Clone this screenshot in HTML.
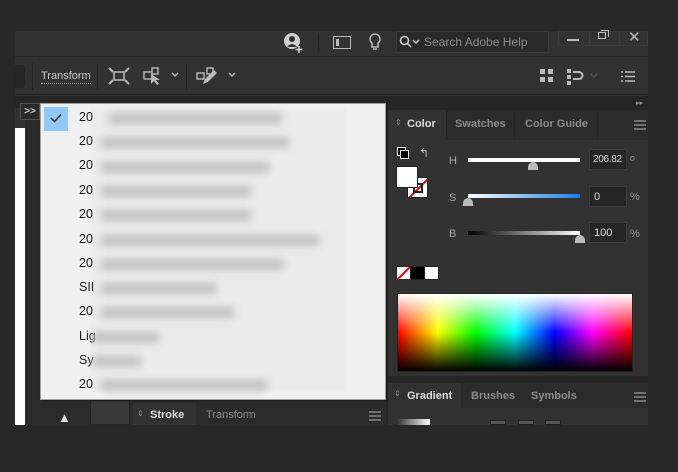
<!DOCTYPE html>
<html><head><meta charset="utf-8"><style>
*{margin:0;padding:0;box-sizing:border-box}
body{width:678px;height:472px;background:#282828;position:relative;overflow:hidden;font-family:"Liberation Sans",sans-serif}
.a{position:absolute}
.t{color:#c8c8c8;font-size:11px}
.tab{position:absolute;font-size:11px;font-weight:bold;color:#8d8d8d}
.row{position:absolute;left:79px;font-size:12.5px;color:#1a1a1a}
.bl{position:absolute;height:11px;background:#c2c2c2;filter:blur(4px);border-radius:5px}
</style></head><body>
<div class="a" style="left:15px;top:31px;width:633px;height:394px;background:#323232"></div>
<div class="a" style="left:15px;top:31px;width:633px;height:26px;background:#323232;border-bottom:1px solid #262626"></div>
<svg class="a" style="left:283px;top:32px" width="22" height="22" viewBox="0 0 22 22"><circle cx="9" cy="9" r="8" fill="#d0d0d0"/><circle cx="9" cy="7" r="3" fill="#323232"/><path d="M4 15 q5-6 10 0" fill="#323232"/><path d="M16 14v7M12.5 17.5h7" stroke="#d0d0d0" stroke-width="1.6"/></svg>
<div class="a" style="left:318px;top:34px;width:1px;height:18px;background:#262626"></div>
<div class="a" style="left:333px;top:36px;width:18px;height:13px;border:1.5px solid #bbb"></div>
<div class="a" style="left:336px;top:39px;width:3px;height:7px;background:#bbb"></div>
<svg class="a" style="left:368px;top:33px" width="14" height="19"><path d="M7 1a5 5 0 0 0-3 9v4h6v-4a5 5 0 0 0-3-9z" fill="none" stroke="#bbb" stroke-width="1.5"/><path d="M5 16h4" stroke="#bbb" stroke-width="1.5"/></svg>
<div class="a" style="left:396px;top:31px;width:153px;height:22px;background:#2a2a2a;border:1px solid #3a3a3a"></div>
<svg class="a" style="left:399px;top:35px" width="24" height="14"><circle cx="5.5" cy="5.5" r="4" fill="none" stroke="#ccc" stroke-width="1.6"/><path d="M8.5 8.5l3.5 3.5M14 5l3 3 3-3" stroke="#ccc" stroke-width="1.5" fill="none"/></svg>
<div class="a t" style="left:424px;top:35px;color:#8e8e8e;font-size:12px">Search Adobe Help</div>
<div class="a" style="left:558px;top:31px;width:90px;height:15px;border:1px solid #3b3b3b;background:#333"></div>
<div class="a" style="left:567px;top:39px;width:12px;height:2px;background:#bbb"></div>
<div class="a" style="left:589px;top:31px;width:1px;height:15px;background:#3b3b3b"></div>
<div class="a" style="left:619px;top:31px;width:1px;height:15px;background:#3b3b3b"></div>
<div class="a" style="left:598px;top:32px;width:8px;height:7px;border:1.5px solid #bbb"></div>
<div class="a" style="left:601px;top:30px;width:8px;height:7px;border:1.5px solid #bbb;border-left:none;border-bottom:none"></div>
<div class="a t" style="left:628px;top:28px;font-size:15px;color:#bbb">✕</div>
<div class="a" style="left:15px;top:58px;width:633px;height:37px;background:#323232;border-bottom:1px solid #262626"></div>
<div class="a" style="left:15px;top:65px;width:10px;height:23px;background:#262626;border-radius:0 3px 3px 0"></div>
<div class="a" style="left:32px;top:63px;width:1px;height:27px;background:#262626"></div>
<div class="a t" style="left:41px;top:70px;font-size:11px;color:#c8c8c8;border-bottom:1px dotted #999;line-height:13px">Transform</div>
<div class="a" style="left:97px;top:63px;width:1px;height:27px;background:#262626"></div>
<svg class="a" style="left:108px;top:67px" width="22" height="18"><rect x="6" y="5" width="10" height="8" fill="none" stroke="#bbb" stroke-width="1.5"/><path d="M1 1l4 4M21 1l-4 4M1 17l4-4M21 17l-4-4" stroke="#bbb" stroke-width="2"/></svg>
<svg class="a" style="left:143px;top:67px" width="38" height="20"><rect x="1" y="5" width="8" height="7" fill="none" stroke="#bbb" stroke-width="1.4"/><rect x="9" y="1" width="6" height="6" fill="none" stroke="#bbb" stroke-width="1.4"/><path d="M8 7l0 10 3-3 3 4 2-1-3-4 4 0z" fill="#bbb"/><path d="M29 6l3 3 3-3" fill="none" stroke="#bbb" stroke-width="1.4"/></svg>
<div class="a" style="left:186px;top:63px;width:1px;height:27px;background:#262626"></div>
<svg class="a" style="left:196px;top:67px" width="44" height="20"><rect x="1" y="6" width="7" height="6" fill="none" stroke="#bbb" stroke-width="1.4"/><rect x="11" y="1" width="6" height="6" fill="none" stroke="#bbb" stroke-width="1.4"/><path d="M7 17l2-5 9-9 3 3-9 9z" fill="#bbb"/><path d="M33 6l3 3 3-3" fill="none" stroke="#bbb" stroke-width="1.4"/></svg>
<svg class="a" style="left:539px;top:68px" width="16" height="16"><rect x="1" y="1" width="5" height="5" fill="#bbb"/><rect x="9" y="1" width="5" height="5" fill="#bbb"/><rect x="1" y="9" width="5" height="5" fill="#bbb"/><rect x="9" y="9" width="5" height="5" fill="#bbb"/><path d="M7.5 0v16M0 7.5h16" stroke="#323232" stroke-width="1.5"/></svg>
<svg class="a" style="left:566px;top:68px" width="36" height="18"><rect x="1" y="1" width="4" height="4" fill="#bbb"/><rect x="1" y="7" width="4" height="4" fill="#bbb"/><rect x="1" y="13" width="4" height="4" fill="#bbb"/><path d="M7 4h6a3 3 0 0 1 0 7h-6" fill="none" stroke="#bbb" stroke-width="2"/><path d="M25 6l3 3 3-3" fill="none" stroke="#555" stroke-width="1.2"/></svg>
<svg class="a" style="left:621px;top:71px" width="14" height="12"><path d="M0 1h2M0 5.5h2M0 10h2M4 1h10M4 5.5h10M4 10h10" stroke="#bbb" stroke-width="1.6"/></svg>
<div class="a" style="left:15px;top:96px;width:633px;height:12px;background:#262626"></div>
<div class="a" style="left:20px;top:103px;width:20px;height:17px;border:1px solid #555;background:#2a2a2a;color:#ccc;font-size:10px;text-align:center;line-height:15px;font-weight:bold">&gt;&gt;</div>
<div class="a" style="left:15px;top:128px;width:10px;height:297px;background:#fff"></div>
<div class="a" style="left:25px;top:120px;width:15px;height:305px;background:#2b2b2b"></div>
<div class="a" style="left:40px;top:400px;width:348px;height:25px;background:#2b2b2b"></div>
<div class="a" style="left:90px;top:400px;width:40px;height:25px;background:#383838;border:1px solid #262626"></div>
<div class="a" style="left:58px;top:410px;color:#ddd;font-size:13px">▲</div>
<div class="a" style="left:133px;top:403px;width:255px;height:22px;background:#2b2b2b"></div>
<div class="a" style="left:133px;top:403px;width:63px;height:22px;background:#323232"></div>
<div class="a" style="left:137px;top:409px;font-size:8px;color:#888">⇕</div>
<div class="tab" style="left:150px;top:409px;color:#ddd">Stroke</div>
<div class="tab" style="left:206px;top:409px;color:#8d8d8d;font-weight:normal">Transform</div>
<svg class="a" style="left:369px;top:411px" width="12" height="10"><path d="M0 1h12M0 5h12M0 9h12" stroke="#999" stroke-width="1.3"/></svg>
<div class="a" style="left:386px;top:96px;width:262px;height:329px;background:#262626"></div>
<div class="a" style="left:388px;top:110px;width:260px;height:30px;background:#2b2b2b"></div>
<div class="a" style="left:388px;top:110px;width:58px;height:30px;background:#323232"></div>
<div class="a" style="left:446px;top:110px;width:1px;height:30px;background:#262626"></div>
<div class="a" style="left:514px;top:110px;width:1px;height:30px;background:#262626"></div>
<div class="a" style="left:597px;top:110px;width:1px;height:30px;background:#262626"></div>
<div class="a" style="left:395px;top:118px;font-size:8px;color:#888">⇕</div>
<div class="tab" style="left:407px;top:118px;color:#ddd">Color</div>
<div class="tab" style="left:455px;top:118px">Swatches</div>
<div class="tab" style="left:525px;top:118px">Color Guide</div>
<svg class="a" style="left:634px;top:120px" width="12" height="10"><path d="M0 1h12M0 5h12M0 9h12" stroke="#999" stroke-width="1.3"/></svg>
<div class="a" style="left:636px;top:99px;font-size:7px;color:#999">▸▸</div>
<div class="a" style="left:388px;top:140px;width:260px;height:236px;background:#323232"></div>
<div class="a" style="left:397px;top:147px;width:9px;height:9px;border:1.5px solid #eee;background:#000"></div>
<div class="a" style="left:400px;top:150px;width:9px;height:9px;border:1.5px solid #eee;background:#000"></div>
<div class="a" style="left:419px;top:146px;color:#bbb;font-size:12px">↰</div>
<div class="a" style="left:407px;top:177px;width:21px;height:21px;background:#fff;border:1px solid #222;overflow:hidden"><div style="position:absolute;left:-4px;top:9px;width:30px;height:2px;background:#e00;transform:rotate(-45deg)"></div><div style="position:absolute;left:5px;top:5px;width:10px;height:10px;border:2px solid #222;background:transparent"></div></div>
<div class="a" style="left:396px;top:166px;width:22px;height:22px;background:#fff;border:1px solid #222"></div>
<div class="a t" style="left:449px;top:155px;color:#aaa">H</div>
<div class="a t" style="left:449px;top:192px;color:#aaa">S</div>
<div class="a t" style="left:449px;top:228px;color:#aaa">B</div>
<div class="a" style="left:468px;top:158px;width:112px;height:4px;background:#fff"></div>
<div class="a" style="left:468px;top:194px;width:112px;height:4px;background:linear-gradient(90deg,#fff,#1a7fe0)"></div>
<div class="a" style="left:468px;top:231px;width:112px;height:4px;background:linear-gradient(90deg,#000,#fff)"></div>
<div class="a" style="left:528px;top:162px;width:10px;height:8px;background:#bbb;border-radius:5px 5px 0 0"></div>
<div class="a" style="left:463px;top:198px;width:10px;height:8px;background:#bbb;border-radius:5px 5px 0 0"></div>
<div class="a" style="left:575px;top:235px;width:10px;height:8px;background:#bbb;border-radius:5px 5px 0 0"></div>
<div class="a t" style="left:589px;top:149px;width:38px;height:21px;background:#262626;border:1px solid #3c3c3c;color:#ddd;padding:4px 0 0 3px;font-size:10px;letter-spacing:-0.3px">206.82</div>
<div class="a t" style="left:589px;top:186px;width:38px;height:21px;background:#262626;border:1px solid #3c3c3c;color:#ddd;padding:4px 0 0 4px">0</div>
<div class="a t" style="left:589px;top:222px;width:38px;height:21px;background:#262626;border:1px solid #3c3c3c;color:#ddd;padding:4px 0 0 4px">100</div>
<div class="a t" style="left:630px;top:153px;color:#999;font-size:9px">o</div>
<div class="a t" style="left:630px;top:191px;color:#999">%</div>
<div class="a t" style="left:630px;top:228px;color:#999">%</div>
<div class="a" style="left:396px;top:266px;width:43px;height:14px;background:#222"></div>
<div class="a" style="left:397px;top:267px;width:13px;height:12px;background:#fff;overflow:hidden"><div style="position:absolute;left:-3px;top:5px;width:20px;height:2px;background:#e00;transform:rotate(-45deg)"></div></div>
<div class="a" style="left:411px;top:267px;width:13px;height:12px;background:#000"></div>
<div class="a" style="left:425px;top:267px;width:13px;height:12px;background:#fff"></div>
<div class="a" style="left:397px;top:293px;width:236px;height:79px;border:1px solid #222;background:linear-gradient(to bottom,rgba(255,255,255,1) 0%,rgba(255,255,255,0) 50%,rgba(0,0,0,0) 50%,rgba(0,0,0,1) 100%),linear-gradient(90deg,#f00,#ff0 17%,#0f0 33%,#0ff 50%,#00f 67%,#f0f 83%,#f00)"></div>
<div class="a" style="left:388px;top:383px;width:260px;height:42px;background:#323232"></div>
<div class="a" style="left:388px;top:383px;width:260px;height:25px;background:#2b2b2b"></div>
<div class="a" style="left:388px;top:383px;width:73px;height:25px;background:#323232"></div>
<div class="a" style="left:394px;top:389px;font-size:8px;color:#888">⇕</div>
<div class="tab" style="left:407px;top:390px;color:#ddd">Gradient</div>
<div class="tab" style="left:471px;top:390px">Brushes</div>
<div class="tab" style="left:531px;top:390px">Symbols</div>
<svg class="a" style="left:634px;top:392px" width="12" height="10"><path d="M0 1h12M0 5h12M0 9h12" stroke="#999" stroke-width="1.3"/></svg>
<div class="a" style="left:397px;top:419px;width:33px;height:6px;background:linear-gradient(90deg,#333,#fff)"></div>
<div class="a" style="left:490px;top:420px;width:16px;height:5px;background:#555;border:1px solid #222"></div>
<div class="a" style="left:518px;top:420px;width:16px;height:5px;background:#555;border:1px solid #222"></div>
<div class="a" style="left:545px;top:420px;width:16px;height:5px;background:#555;border:1px solid #222"></div>
<div class="a" style="left:40px;top:103px;width:346px;height:297px;background:#f0f0f0;border:1px solid #a0a0a0;box-shadow:1px 1px 2px rgba(0,0,0,.4)"></div>
<div class="a" style="left:44px;top:107px;width:24px;height:24px;background:#90c8f6"></div>
<svg class="a" style="left:50px;top:113px" width="12" height="10"><path d="M1 5l3.5 3.5L11 1.5" fill="none" stroke="#333" stroke-width="1.6"/></svg>
<div class="a" style="left:91px;top:108px;width:254px;height:282px;background:#ebebeb;filter:blur(1px)"></div>
<div class="row" style="top:110px">20</div>
<div class="row" style="top:134px">20</div>
<div class="row" style="top:158px">20</div>
<div class="row" style="top:183px">20</div>
<div class="row" style="top:207px">20</div>
<div class="row" style="top:232px">20</div>
<div class="row" style="top:256px">20</div>
<div class="row" style="top:280px">SII</div>
<div class="row" style="top:304px">20</div>
<div class="row" style="top:329px">Lig</div>
<div class="row" style="top:353px">Sy</div>
<div class="row" style="top:377px">20</div>
<div class="bl" style="left:108px;top:113px;width:175px"></div>
<div class="bl" style="left:100px;top:137px;width:190px"></div>
<div class="bl" style="left:100px;top:162px;width:170px"></div>
<div class="bl" style="left:100px;top:186px;width:152px"></div>
<div class="bl" style="left:100px;top:210px;width:152px"></div>
<div class="bl" style="left:100px;top:235px;width:220px"></div>
<div class="bl" style="left:100px;top:259px;width:185px"></div>
<div class="bl" style="left:100px;top:283px;width:118px"></div>
<div class="bl" style="left:100px;top:307px;width:135px"></div>
<div class="bl" style="left:92px;top:332px;width:68px"></div>
<div class="bl" style="left:92px;top:356px;width:50px"></div>
<div class="bl" style="left:100px;top:380px;width:168px"></div>
</body></html>
